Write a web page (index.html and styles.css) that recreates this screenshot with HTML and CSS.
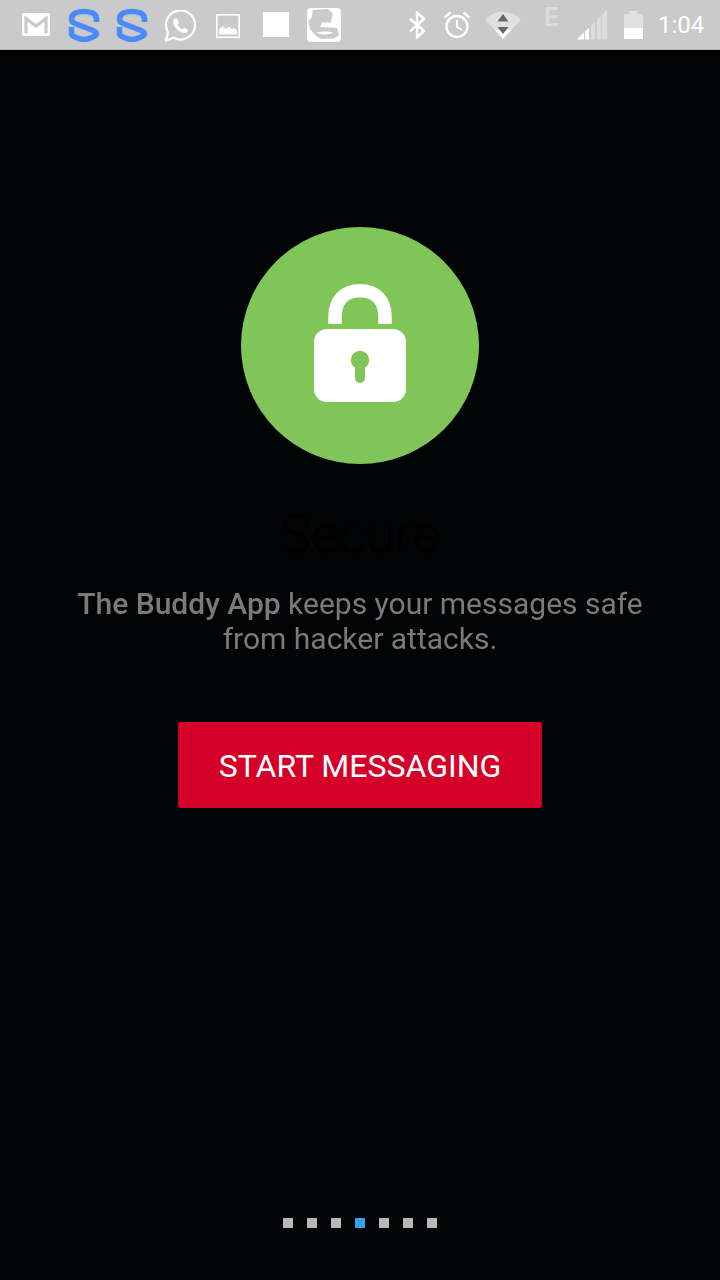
FILE: index.html
```html
<!DOCTYPE html>
<html lang="en">
<head>
<meta charset="utf-8">
<title>The Buddy App</title>
<link rel="stylesheet" href="styles.css">
</head>
<body>
<div class="screen">
  <header class="statusbar">
    <div class="status-left">
      <svg class="ic ic-gmail" viewBox="0 0 28 24"><rect x="0" y="0" width="28" height="23" rx="2" fill="#fff"/><path d="M4 20.500V5.500l10 7.500 10-7.500v15" fill="none" stroke="#cacaca" stroke-width="3.200"/></svg>
      <svg class="ic ic-s1" viewBox="0 0 32 34"><path d="M28.500 14v-3C28.500 5 22 3.500 16 3.500S3.500 5 3.500 11c0 2.500 1 3.500 3.500 4.500L25 22.500c2.500 1 3.500 2 3.500 3.500 0 2-8.500 5.500-12.500 5.500S3.500 28 3.500 26v-7" fill="none" stroke="#4a8cf7" stroke-width="5.600"/></svg>
      <svg class="ic ic-s2" viewBox="0 0 32 34"><path d="M28.500 14v-3C28.500 5 22 3.500 16 3.500S3.500 5 3.500 11c0 2.500 1 3.500 3.500 4.500L25 22.500c2.500 1 3.500 2 3.500 3.500 0 2-8.500 5.500-12.500 5.500S3.500 28 3.500 26v-7" fill="none" stroke="#4a8cf7" stroke-width="5.600"/></svg>
      <svg class="ic ic-wa" viewBox="0 0 32 32"><path d="M1.800 30.500l2.300-8A14.500 14.500 0 1 1 9.800 27.800z" fill="none" stroke="#fff" stroke-width="2.200" stroke-linejoin="round"/><path d="M11.500 8.500c-1 0-2.500 1.500-2.500 3.500 0 4.500 6.500 11 11.500 11 2 0 3.500-1.500 3.500-3 0-.7-3.200-2.300-3.700-2.300-.6 0-1.300 1.600-1.900 1.600-1.400 0-5-3.500-5-5 0-.6 1.400-1.300 1.400-1.900 0-.6-1.500-3.900-2.300-3.900z" fill="#fff"/></svg>
      <svg class="ic ic-pic" viewBox="0 0 24 24"><rect x=".8" y=".8" width="22.400" height="22.400" fill="none" stroke="#fff" stroke-width="1.600"/><path d="M3 20.500v-5l3.500-3.500 3.500 3 3-2.500 3 2.500 2-1 3 2.500v4z" fill="#fff"/></svg>
      <div class="ic-square"></div>
      <svg class="ic ic-app" viewBox="0 0 34 34"><rect width="34" height="34" rx="4" fill="#fff"/><path d="M5.700 2L21 1l4.700 4.500L24 14.500h-9L13 19l17 1 2 7-5 3.500-13 .5-6-4-5-6-1.500-8L5 9z" fill="#cacaca"/><path d="M9 24.500c5-1.500 13-1.500 17.500 0-4.500 2.500-12.500 2.500-17.500 0z" fill="#fff"/></svg>
    </div>
    <div class="status-right">
      <svg class="ic ic-bt" viewBox="0 0 18 28"><path d="M2 7.500l14 12.500-7 6.500V1.500l7 6.500L2 20.500" fill="none" stroke="#fff" stroke-width="2.400"/></svg>
      <svg class="ic ic-alarm" viewBox="0 0 28 28"><circle cx="14" cy="15.500" r="10.500" fill="none" stroke="#fff" stroke-width="2.400"/><path d="M14 9v7l5 3" fill="none" stroke="#fff" stroke-width="2"/><path d="M1.500 6.500L7.500 1.500M26.500 6.500L20.500 1.500" stroke="#fff" stroke-width="2.400"/></svg>
      <svg class="ic ic-wifi" viewBox="0 0 36 30"><path d="M0 9.500C10 -1 26 -1 36 9.500L18 29z" fill="#e0e0e0"/><path d="M10 20h16l-8 9z" fill="#fff"/><path d="M18 4l5.500 7.500h-11z" fill="#666"/><path d="M18 24l-5.500-7h11z" fill="#666"/></svg>
      <span class="net-e">E</span>
      <svg class="ic ic-signal" viewBox="0 0 30 30"><path d="M0 29.500L30 0v29.500z" fill="#dcdcdc"/><path d="M0 29.500L7 22.600v6.900zM8 21.600l4-3.900v11.800H8z" fill="#fff"/><path d="M7 21h1v9H7zM12 16h2v14h-2zM18 10h2v20h-2zM24 4h1v26h-1z" fill="#cacaca"/></svg>
      <svg class="ic ic-batt" viewBox="0 0 19 28"><path d="M5.500 0h8v3H19v25H0V3h5.500z" fill="#e0e0e0"/><rect x="0" y="17" width="19" height="11" fill="#fff"/></svg>
      <span class="clock">1:04</span>
    </div>
  </header>
  <main class="content">
    <div class="badge">
      <svg class="lock" viewBox="0 0 92 118"><path d="M21 40V33C21 16 31 6.750 46 6.750S71 16 71 33V40" fill="none" stroke="#fff" stroke-width="13.500"/><rect x="0" y="45" width="92" height="73" rx="13" fill="#fff"/><circle cx="46" cy="76" r="9.200" fill="#7fc557"/><rect x="41" y="76" width="10" height="23" rx="5" fill="#7fc557"/></svg>
    </div>
    <h1 class="title">Secure</h1>
    <p class="desc"><strong>The Buddy App</strong> keeps your messages safe<br>from hacker attacks.</p>
    <button class="cta">START MESSAGING</button>
  </main>
  <nav class="dots">
    <span class="dot"></span><span class="dot"></span><span class="dot"></span><span class="dot active"></span><span class="dot"></span><span class="dot"></span><span class="dot"></span>
  </nav>
</div>
</body>
</html>
```
FILE: styles.css
```css
* { box-sizing: border-box; }
html, body { margin: 0; padding: 0; background: #010304; }
.screen {
  width: 720px;
  height: 1280px;
  display: flex;
  flex-direction: column;
  overflow: hidden;
  background: #010304;
  font-family: Roboto, "Liberation Sans", sans-serif;
}
.statusbar {
  height: 50px;
  flex: none;
  background: #cacaca;
  border-bottom: 1px solid #b5b5b5;
  display: flex;
  justify-content: space-between;
  align-items: center;
  padding: 0 15px 0 22px;
}
.status-left, .status-right { display: flex; align-items: center; }
.ic { display: block; flex: none; }
.ic-gmail { width: 28px; height: 24px; margin-top: 1px; }
.ic-s1 { width: 32px; height: 34px; margin-left: 18px; margin-top: 1px; }
.ic-s2 { width: 32px; height: 34px; margin-left: 16px; margin-top: 1px; }
.ic-wa { width: 32px; height: 32px; margin-left: 16px; margin-top: 2px; }
.ic-pic { width: 24px; height: 24px; margin-left: 20px; margin-top: 2px; }
.ic-square { width: 26px; height: 25px; margin-left: 23px; background: #fff; }
.ic-app { width: 34px; height: 34px; margin-left: 18px; margin-top: 1px; }
.ic-bt { width: 18px; height: 28px; margin-top: 1px; }
.ic-alarm { width: 28px; height: 28px; margin-left: 17px; margin-top: 1px; }
.ic-wifi { width: 36px; height: 30px; margin-left: 14px; }
.net-e {
  width: 18px;
  margin-left: 23px;
  margin-top: -14px;
  color: #dcdcdc;
  font-size: 25px;
  font-weight: 700;
  line-height: 24px;
}
.ic-signal { width: 30px; height: 30px; margin-left: 15px; }
.ic-batt { width: 19px; height: 28px; margin-left: 17px; margin-top: 1px; }
.clock {
  margin-left: 15px;
  color: #fff;
  font-size: 24px;
  line-height: 28px;
  width: 47px;
}
.content {
  flex: none;
  display: flex;
  flex-direction: column;
  align-items: center;
  padding-top: 177px;
}
.badge {
  width: 238px;
  height: 237px;
  border-radius: 50%;
  background: #7fc557;
  display: flex;
  align-items: center;
  justify-content: center;
  padding-bottom: 6px;
}
.lock { display: block; width: 92px; height: 118px; }
.title {
  margin: 40px 0 0;
  color: #000;
  font-size: 53px;
  font-weight: 300;
  line-height: 62px;
}
.desc {
  margin: 20px 0 0;
  color: #7a7a7a;
  font-size: 30px;
  line-height: 35px;
  text-align: center;
  will-change: opacity;
}
.desc strong { font-weight: 500; }
.cta {
  margin-top: 66px;
  width: 364px;
  height: 86px;
  border: 0;
  border-radius: 3px;
  background: #d50029;
  color: #fff;
  font-family: inherit;
  font-size: 32px;
  font-weight: 400;
  padding: 2px 0 0;
}
.dots {
  margin-top: auto;
  margin-bottom: 52px;
  display: flex;
  justify-content: center;
  gap: 14px;
}
.dot { width: 10px; height: 10px; background: #b8b8b8; }
.dot.active { background: #2ba5e6; }
```
